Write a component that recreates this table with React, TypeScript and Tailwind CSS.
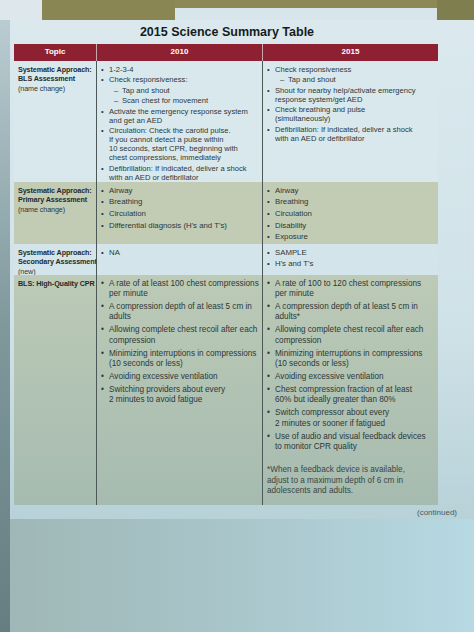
import React from 'react';

type Item = { lines: string[]; sub?: boolean };

const font = { fontFamily: '"Liberation Sans", Arial, sans-serif' };

function Bullets({ items, gap }: { items: Item[]; gap: string }) {
  return (
    <ul className={`flex flex-col ${gap}`}>
      {items.map((it, i) => (
        <li key={i} className={`flex ${it.sub ? 'pl-[13px]' : ''}`}>
          <span className="w-[8px] shrink-0">{it.sub ? '–' : '•'}</span>
          <span className="flex flex-col">
            {it.lines.map((l, j) => (
              <span key={j} className="whitespace-nowrap">{l}</span>
            ))}
          </span>
        </li>
      ))}
    </ul>
  );
}

function Topic({ title, sub }: { title: string[]; sub?: string }) {
  return (
    <div className="flex flex-col pl-[4px] pt-[4px] text-[7.2px] leading-[9.4px] tracking-[-0.1px]">
      {title.map((t) => (
        <span key={t} className="font-bold whitespace-nowrap text-[#1f2a2a]">{t}</span>
      ))}
      {sub && <span className="whitespace-nowrap">{sub}</span>}
    </div>
  );
}

const rows: {
  topic: React.ReactNode;
  a: Item[];
  b: Item[];
  bg: string;
  h: string;
  text: string;
  gap: string;
  note?: string[];
}[] = [
  {
    topic: <Topic title={['Systematic Approach:', 'BLS Assessment']} sub="(name change)" />,
    bg: 'bg-[#d9e8ed]',
    h: 'h-[121px]',
    text: 'text-[7.6px] leading-[9px]',
    gap: 'gap-[1.5px]',
    a: [
      { lines: ['1-2-3-4'] },
      { lines: ['Check responsiveness:'] },
      { lines: ['Tap and shout'], sub: true },
      { lines: ['Scan chest for movement'], sub: true },
      { lines: ['Activate the emergency response system', 'and get an AED'] },
      { lines: ['Circulation: Check the carotid pulse.', 'If you cannot detect a pulse within', '10 seconds, start CPR, beginning with', 'chest compressions, immediately'] },
      { lines: ['Defibrillation: If indicated, deliver a shock', 'with an AED or defibrillator'] },
    ],
    b: [
      { lines: ['Check responsiveness'] },
      { lines: ['Tap and shout'], sub: true },
      { lines: ['Shout for nearby help/activate emergency', 'response system/get AED'] },
      { lines: ['Check breathing and pulse', '(simultaneously)'] },
      { lines: ['Defibrillation: If indicated, deliver a shock', 'with an AED or defibrillator'] },
    ],
  },
  {
    topic: <Topic title={['Systematic Approach:', 'Primary Assessment']} sub="(name change)" />,
    bg: 'bg-[#c2cbb4]',
    h: 'h-[62px]',
    text: 'text-[7.8px] leading-[9.6px]',
    gap: 'gap-[2px]',
    a: [
      { lines: ['Airway'] },
      { lines: ['Breathing'] },
      { lines: ['Circulation'] },
      { lines: ["Differential diagnosis (H's and T's)"] },
    ],
    b: [
      { lines: ['Airway'] },
      { lines: ['Breathing'] },
      { lines: ['Circulation'] },
      { lines: ['Disability'] },
      { lines: ['Exposure'] },
    ],
  },
  {
    topic: <Topic title={['Systematic Approach:', 'Secondary Assessment']} sub="(new)" />,
    bg: 'bg-[#d3e4ea]',
    h: 'h-[31px]',
    text: 'text-[7.8px] leading-[9.6px]',
    gap: 'gap-[2px]',
    a: [{ lines: ['NA'] }],
    b: [{ lines: ['SAMPLE'] }, { lines: ["H's and T's"] }],
  },
  {
    topic: <Topic title={['BLS: High-Quality CPR']} />,
    bg: 'bg-gradient-to-b from-[#bccab6] to-[#a6bbb0]',
    h: 'h-[230px]',
    text: 'text-[8.2px] leading-[10.4px]',
    gap: 'gap-[2.5px]',
    a: [
      { lines: ['A rate of at least 100 chest compressions', 'per minute'] },
      { lines: ['A compression depth of at least 5 cm in', 'adults'] },
      { lines: ['Allowing complete chest recoil after each', 'compression'] },
      { lines: ['Minimizing interruptions in compressions', '(10 seconds or less)'] },
      { lines: ['Avoiding excessive ventilation'] },
      { lines: ['Switching providers about every', '2 minutes to avoid fatigue'] },
    ],
    b: [
      { lines: ['A rate of 100 to 120 chest compressions', 'per minute'] },
      { lines: ['A compression depth of at least 5 cm in', 'adults*'] },
      { lines: ['Allowing complete chest recoil after each', 'compression'] },
      { lines: ['Minimizing interruptions in compressions', '(10 seconds or less)'] },
      { lines: ['Avoiding excessive ventilation'] },
      { lines: ['Chest compression fraction of at least', '60% but ideally greater than 80%'] },
      { lines: ['Switch compressor about every', '2 minutes or sooner if fatigued'] },
      { lines: ['Use of audio and visual feedback devices', 'to monitor CPR quality'] },
    ],
    note: ['*When a feedback device is available,', 'adjust to a maximum depth of 6 cm in', 'adolescents and adults.'],
  },
];

export default function App() {
  return (
    <div className="w-[474px] h-[632px] overflow-hidden flex flex-col bg-[#c9dfe6] text-[#2c3838]" style={font}>
      {/* desk and page edges */}
      <div className="h-[20px] flex shrink-0">
        <div className="w-[42px] bg-[#dde7ec]" />
        <div className="w-[133px] bg-[#8a8654]" />
        <div className="w-[262px] flex flex-col">
          <div className="h-[8px] bg-[#8d8957]" />
          <div className="flex-1 bg-[#d8e5ea]" />
        </div>
        <div className="flex-1 bg-[#7f7e4e]" />
      </div>

      <div className="flex-1 flex">
        <div className="w-[10px] bg-gradient-to-b from-[#b9ccd2] via-[#7f989c] to-[#667e82]" />
        <div className="flex-1 flex flex-col bg-gradient-to-b from-[#dbe9ee] via-[#cfe2e8] to-[#aac8cf]">
          <h1 className="text-center font-bold text-[12.5px] text-[#161c1c] pt-[3px] pb-[2px] pr-[30px]">
            2015 Science Summary Table
          </h1>

          <div className="ml-[4px] w-[424px] flex flex-col">
            <div className="flex h-[17px] bg-[#8e2131] text-white font-bold text-[8px]">
              <div className="w-[82px] flex items-center justify-center">Topic</div>
              <div className="w-[166px] border-l border-[#c7a7ac] flex items-center justify-center">2010</div>
              <div className="flex-1 border-l border-[#c7a7ac] flex items-center justify-center">2015</div>
            </div>
            {rows.map((r, i) => (
              <div key={i} className={`flex ${r.h} ${r.bg} ${r.text} overflow-hidden`}>
                <div className="w-[82px] shrink-0">{r.topic}</div>
                <div className="w-[166px] shrink-0 border-l border-[#4c5858] px-[4px] pt-[4px]">
                  <Bullets items={r.a} gap={r.gap} />
                </div>
                <div className="flex-1 border-l border-[#4c5858] px-[4px] pt-[4px] flex flex-col">
                  <Bullets items={r.b} gap={r.gap} />
                  {r.note && (
                    <div className="mt-[13px] flex flex-col text-[#3a4646]">
                      {r.note.map((l) => (
                        <span key={l} className="whitespace-nowrap">{l}</span>
                      ))}
                    </div>
                  )}
                </div>
              </div>
            ))}
          </div>

          <div className="w-[447px] text-right text-[8px] text-[#4a5a5e] pt-[2px]">(continued)</div>
          <div className="flex-1 bg-gradient-to-r from-[#9fb7b6] via-[#a9c6cb] to-[#b7d9e3]" />
        </div>
      </div>
    </div>
  );
}
